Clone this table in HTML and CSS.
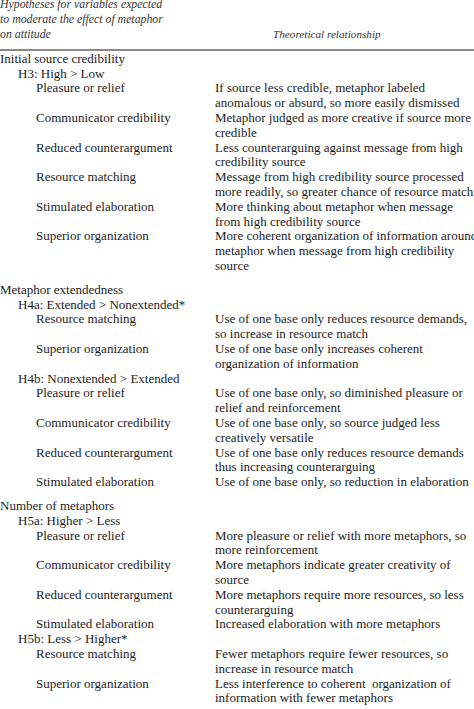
FILE: index.html
```html
<!DOCTYPE html>
<html lang="en">
<head>
<meta charset="utf-8">
<title>Moderating variables</title>
<link rel="stylesheet" href="styles.css">
</head>
<body>
<div class="table">
  <div class="head">
    <div class="head-left">Hypotheses for variables expected<br>to moderate the effect of metaphor<br>on attitude</div>
    <div class="head-right">Theoretical relationship</div>
  </div>
  <div class="rule"></div>

  <section class="group">
    <div class="row"><div class="var lv1">Initial source credibility</div><div class="rel"></div></div>
    <div class="row"><div class="var lv2">H3: High &gt; Low</div><div class="rel"></div></div>
    <div class="row"><div class="var lv3">Pleasure or relief</div><div class="rel">If source less credible, metaphor labeled<br>anomalous or absurd, so more easily dismissed</div></div>
    <div class="row"><div class="var lv3">Communicator credibility</div><div class="rel">Metaphor judged as more creative if source more<br>credible</div></div>
    <div class="row"><div class="var lv3">Reduced counterargument</div><div class="rel">Less counterarguing against message from high<br>credibility source</div></div>
    <div class="row"><div class="var lv3">Resource matching</div><div class="rel">Message from high credibility source processed<br>more readily, so greater chance of resource match</div></div>
    <div class="row"><div class="var lv3">Stimulated elaboration</div><div class="rel">More thinking about metaphor when message<br>from high credibility source</div></div>
    <div class="row"><div class="var lv3">Superior organization</div><div class="rel">More coherent organization of information around<br>metaphor when message from high credibility<br>source</div></div>
  </section>

  <section class="group">
    <div class="row"><div class="var lv1">Metaphor extendedness</div><div class="rel"></div></div>
    <div class="row"><div class="var lv2">H4a: Extended &gt; Nonextended*</div><div class="rel"></div></div>
    <div class="row"><div class="var lv3">Resource matching</div><div class="rel">Use of one base only reduces resource demands,<br>so increase in resource match</div></div>
    <div class="row"><div class="var lv3">Superior organization</div><div class="rel">Use of one base only increases coherent<br>organization of information</div></div>
    <div class="row"><div class="var lv2">H4b: Nonextended &gt; Extended</div><div class="rel"></div></div>
    <div class="row"><div class="var lv3">Pleasure or relief</div><div class="rel">Use of one base only, so diminished pleasure or<br>relief and reinforcement</div></div>
    <div class="row"><div class="var lv3">Communicator credibility</div><div class="rel">Use of one base only, so source judged less<br>creatively versatile</div></div>
    <div class="row"><div class="var lv3">Reduced counterargument</div><div class="rel">Use of one base only reduces resource demands<br>thus increasing counterarguing</div></div>
    <div class="row"><div class="var lv3">Stimulated elaboration</div><div class="rel">Use of one base only, so reduction in elaboration</div></div>
  </section>

  <section class="group">
    <div class="row"><div class="var lv1">Number of metaphors</div><div class="rel"></div></div>
    <div class="row"><div class="var lv2">H5a: Higher &gt; Less</div><div class="rel"></div></div>
    <div class="row"><div class="var lv3">Pleasure or relief</div><div class="rel">More pleasure or relief with more metaphors, so<br>more reinforcement</div></div>
    <div class="row"><div class="var lv3">Communicator credibility</div><div class="rel">More metaphors indicate greater creativity of<br>source</div></div>
    <div class="row"><div class="var lv3">Reduced counterargument</div><div class="rel">More metaphors require more resources, so less<br>counterarguing</div></div>
    <div class="row"><div class="var lv3">Stimulated elaboration</div><div class="rel">Increased elaboration with more metaphors</div></div>
    <div class="row"><div class="var lv2">H5b: Less &gt; Higher*</div><div class="rel"></div></div>
    <div class="row"><div class="var lv3">Resource matching</div><div class="rel">Fewer metaphors require fewer resources, so<br>increase in resource match</div></div>
    <div class="row"><div class="var lv3">Superior organization</div><div class="rel">Less interference to coherent&nbsp; organization of<br>information with fewer metaphors</div></div>
  </section>
</div>
</body>
</html>
```

FILE: styles.css
```css
html, body {
  margin: 0;
  padding: 0;
  background: #ffffff;
  overflow: hidden;
}

body {
  font-family: "Liberation Serif", "Times New Roman", serif;
  font-size: 13px;
  line-height: 14.8px;
  color: #1c1c1c;
}

.table {
  width: 490px;
  display: flex;
  flex-direction: column;
}

.head {
  display: grid;
  grid-template-columns: 215px 275px;
  margin-top: -3px;
  font-style: italic;
  font-size: 11.8px;
  color: #363636;
}

.head-right {
  align-self: end;
  padding-left: 58px;
  font-size: 11.2px;
}

.rule {
  height: 2px;
  background: #8a8a8a;
  margin-top: 7.5px;
  margin-bottom: 1px;
}

.group + .group {
  margin-top: 9px;
}

.row {
  display: grid;
  grid-template-columns: 215px 275px;
}

.var {
  white-space: nowrap;
}

.lv1 { padding-left: 0; }
.lv2 { padding-left: 18px; }
.lv3 { padding-left: 36px; }

.rel {
  white-space: nowrap;
}
```
